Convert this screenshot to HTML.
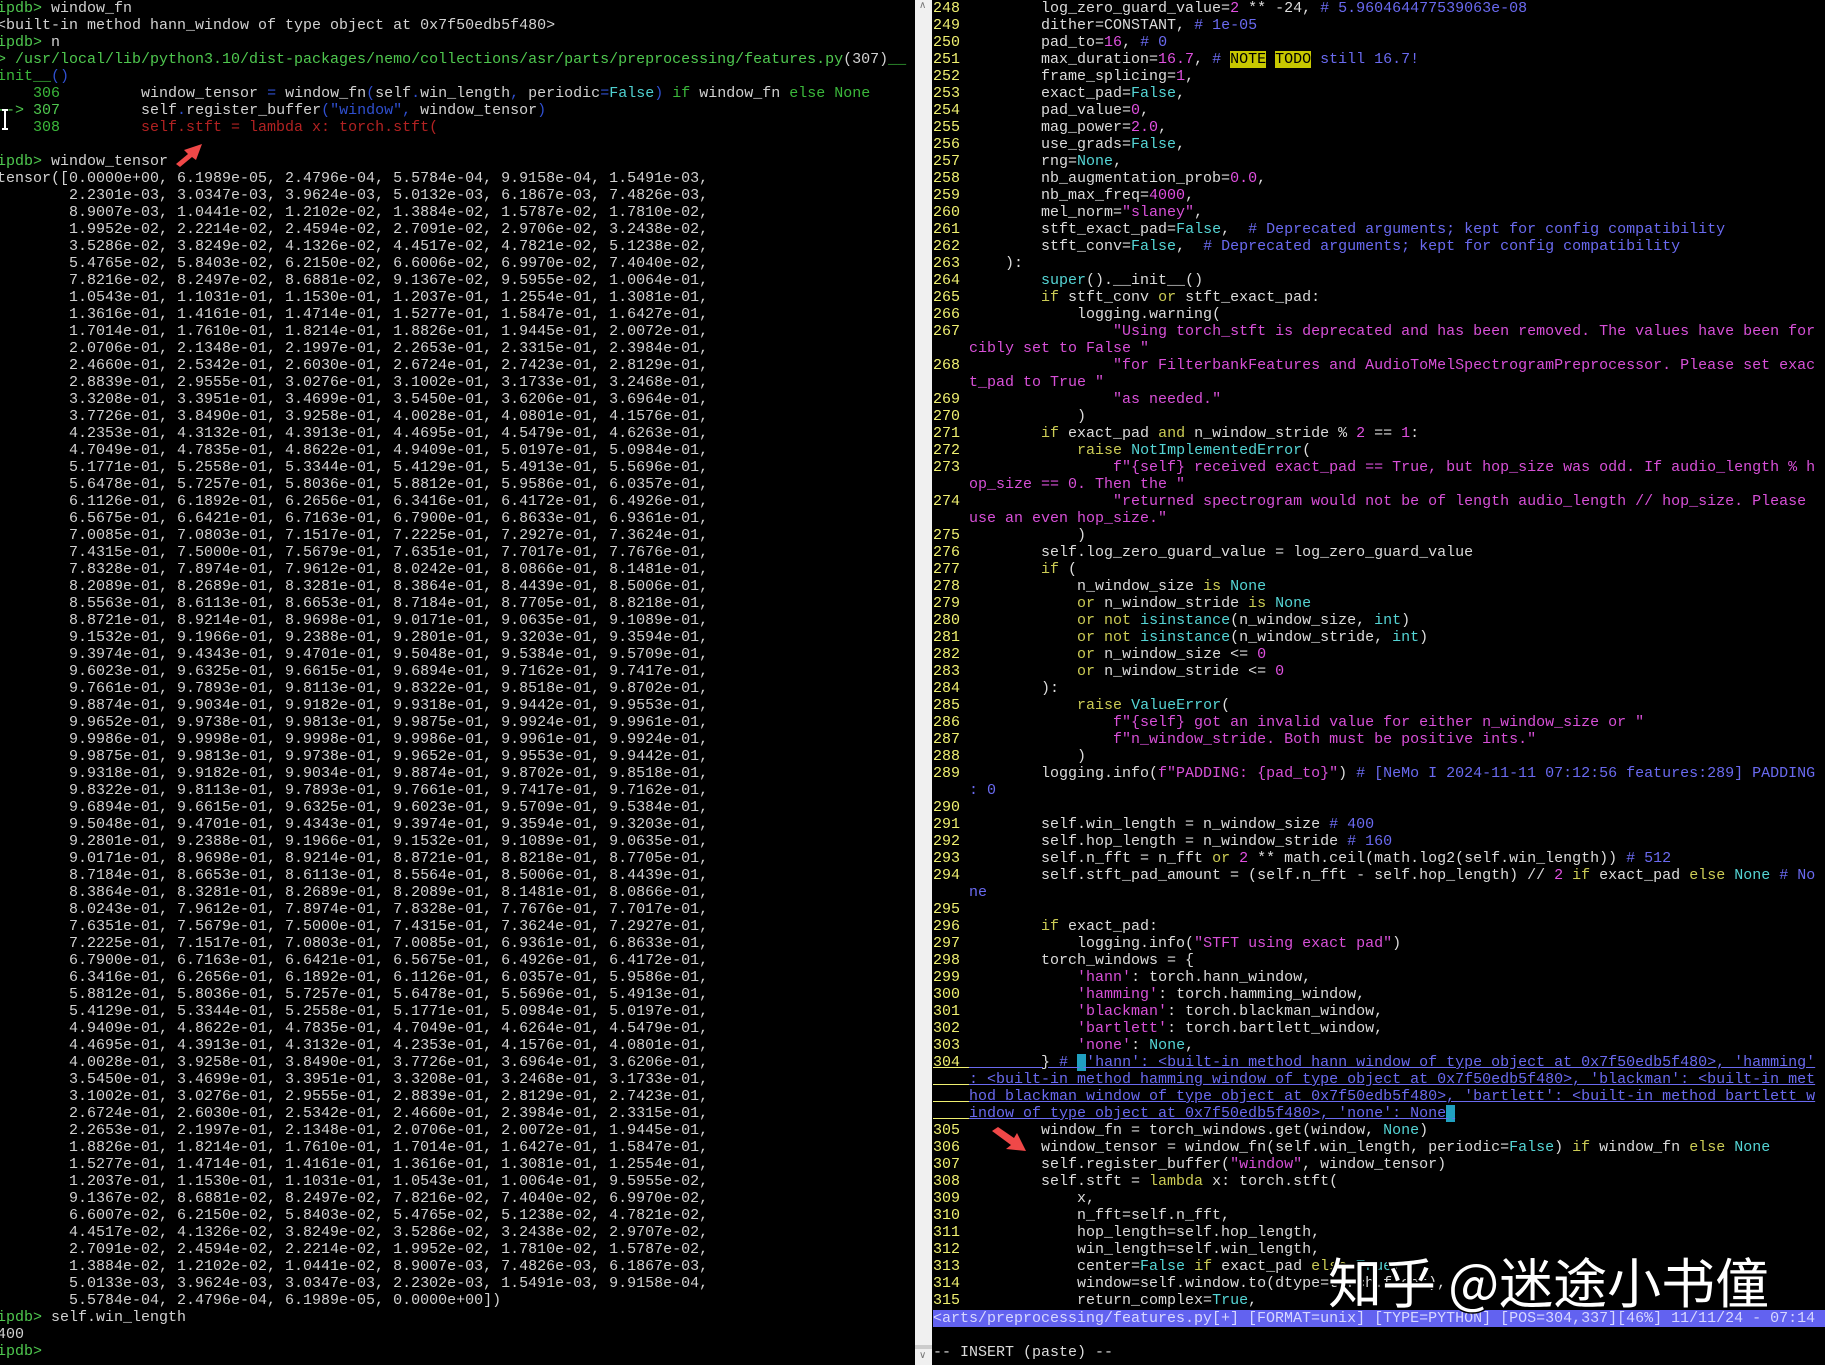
<!DOCTYPE html>
<html><head><meta charset="utf-8">
<style>
html,body{margin:0;padding:0;background:#000;width:1825px;height:1365px;overflow:hidden;position:relative}
pre{margin:0;font-family:"Liberation Mono","DejaVu Sans Mono",monospace;white-space:pre}
#L{position:absolute;left:-3px;top:0;font-size:15px;line-height:17px;color:#d2d2d2}
#R{position:absolute;left:933px;top:0;width:892px;font-size:15px;color:#dcdcdc}
#R div{height:17px;line-height:17px;white-space:pre;font-family:"Liberation Mono","DejaVu Sans Mono",monospace;overflow:hidden}
.g{color:#4fc84f}.gr{color:#3bb83b}.bl{color:#2f4fd0}.cy{color:#4fd0d0}.rd{color:#b22222}
.n{color:#f0f070}.m{color:#e050e0}.c{color:#6a6af0}.k{color:#cccc55}.t{color:#55d5d5}.s{color:#d850d8}
.hl{background:#c8c800;color:#000}
.u .n{text-decoration:underline;text-decoration-color:#f0f070}
.u{text-decoration:underline;text-decoration-color:#6a6af0}
.cur{background:#20a0c0;color:#20a0c0}
#sb{position:absolute;left:915px;top:0;width:17px;height:1365px;background:#f0f0f0}
#sb .a{position:absolute;left:4px;font-size:10px;color:#777;font-family:"DejaVu Sans",sans-serif}
#status{position:absolute;left:933px;top:1310px;width:892px;height:17px;background:#6262f0;color:#d8d8ff;font-size:15px;line-height:17px}
#ins{position:absolute;left:933px;top:1344px;font-size:15px;line-height:17px;color:#dcdcdc}
#wm{position:absolute;left:1328px;top:1248px;font-family:"Noto Sans CJK SC","WenQuanYi Zen Hei",sans-serif;font-size:54px;line-height:64px;color:#fff;-webkit-text-stroke:3px #000;paint-order:stroke fill;letter-spacing:0px}
svg{position:absolute}
</style></head><body>
<pre id="L"><span class="g">ipdb&gt;</span> window_fn
&lt;built-in method hann_window of type object at 0x7f50edb5f480&gt;
<span class="g">ipdb&gt;</span> n
<span class="g">&gt; /usr/local/lib/python3.10/dist-packages/nemo/collections/asr/parts/preprocessing/features.py</span>(307)<span class="gr">__</span>
<span class="gr">init__</span><span class="bl">()</span>
<span class="gr">    306</span>         window_tensor <span class="bl">=</span> window_fn<span class="bl">(</span>self<span class="bl">.</span>win_length<span class="bl">,</span> periodic<span class="bl">=</span><span class="cy">False</span><span class="bl">)</span> <span class="gr">if</span> window_fn <span class="gr">else None</span>
<span class="g">--&gt; 307</span>         self<span class="bl">.</span>register_buffer<span class="bl">(</span><span class="bl">"window"</span><span class="bl">,</span> window_tensor<span class="bl">)</span>
<span class="gr">    308</span>         <span class="rd">self.stft = lambda x: torch.stft(</span>

<span class="g">ipdb&gt;</span> window_tensor
tensor([0.0000e+00, 6.1989e-05, 2.4796e-04, 5.5784e-04, 9.9158e-04, 1.5491e-03,
        2.2301e-03, 3.0347e-03, 3.9624e-03, 5.0132e-03, 6.1867e-03, 7.4826e-03,
        8.9007e-03, 1.0441e-02, 1.2102e-02, 1.3884e-02, 1.5787e-02, 1.7810e-02,
        1.9952e-02, 2.2214e-02, 2.4594e-02, 2.7091e-02, 2.9706e-02, 3.2438e-02,
        3.5286e-02, 3.8249e-02, 4.1326e-02, 4.4517e-02, 4.7821e-02, 5.1238e-02,
        5.4765e-02, 5.8403e-02, 6.2150e-02, 6.6006e-02, 6.9970e-02, 7.4040e-02,
        7.8216e-02, 8.2497e-02, 8.6881e-02, 9.1367e-02, 9.5955e-02, 1.0064e-01,
        1.0543e-01, 1.1031e-01, 1.1530e-01, 1.2037e-01, 1.2554e-01, 1.3081e-01,
        1.3616e-01, 1.4161e-01, 1.4714e-01, 1.5277e-01, 1.5847e-01, 1.6427e-01,
        1.7014e-01, 1.7610e-01, 1.8214e-01, 1.8826e-01, 1.9445e-01, 2.0072e-01,
        2.0706e-01, 2.1348e-01, 2.1997e-01, 2.2653e-01, 2.3315e-01, 2.3984e-01,
        2.4660e-01, 2.5342e-01, 2.6030e-01, 2.6724e-01, 2.7423e-01, 2.8129e-01,
        2.8839e-01, 2.9555e-01, 3.0276e-01, 3.1002e-01, 3.1733e-01, 3.2468e-01,
        3.3208e-01, 3.3951e-01, 3.4699e-01, 3.5450e-01, 3.6206e-01, 3.6964e-01,
        3.7726e-01, 3.8490e-01, 3.9258e-01, 4.0028e-01, 4.0801e-01, 4.1576e-01,
        4.2353e-01, 4.3132e-01, 4.3913e-01, 4.4695e-01, 4.5479e-01, 4.6263e-01,
        4.7049e-01, 4.7835e-01, 4.8622e-01, 4.9409e-01, 5.0197e-01, 5.0984e-01,
        5.1771e-01, 5.2558e-01, 5.3344e-01, 5.4129e-01, 5.4913e-01, 5.5696e-01,
        5.6478e-01, 5.7257e-01, 5.8036e-01, 5.8812e-01, 5.9586e-01, 6.0357e-01,
        6.1126e-01, 6.1892e-01, 6.2656e-01, 6.3416e-01, 6.4172e-01, 6.4926e-01,
        6.5675e-01, 6.6421e-01, 6.7163e-01, 6.7900e-01, 6.8633e-01, 6.9361e-01,
        7.0085e-01, 7.0803e-01, 7.1517e-01, 7.2225e-01, 7.2927e-01, 7.3624e-01,
        7.4315e-01, 7.5000e-01, 7.5679e-01, 7.6351e-01, 7.7017e-01, 7.7676e-01,
        7.8328e-01, 7.8974e-01, 7.9612e-01, 8.0242e-01, 8.0866e-01, 8.1481e-01,
        8.2089e-01, 8.2689e-01, 8.3281e-01, 8.3864e-01, 8.4439e-01, 8.5006e-01,
        8.5563e-01, 8.6113e-01, 8.6653e-01, 8.7184e-01, 8.7705e-01, 8.8218e-01,
        8.8721e-01, 8.9214e-01, 8.9698e-01, 9.0171e-01, 9.0635e-01, 9.1089e-01,
        9.1532e-01, 9.1966e-01, 9.2388e-01, 9.2801e-01, 9.3203e-01, 9.3594e-01,
        9.3974e-01, 9.4343e-01, 9.4701e-01, 9.5048e-01, 9.5384e-01, 9.5709e-01,
        9.6023e-01, 9.6325e-01, 9.6615e-01, 9.6894e-01, 9.7162e-01, 9.7417e-01,
        9.7661e-01, 9.7893e-01, 9.8113e-01, 9.8322e-01, 9.8518e-01, 9.8702e-01,
        9.8874e-01, 9.9034e-01, 9.9182e-01, 9.9318e-01, 9.9442e-01, 9.9553e-01,
        9.9652e-01, 9.9738e-01, 9.9813e-01, 9.9875e-01, 9.9924e-01, 9.9961e-01,
        9.9986e-01, 9.9998e-01, 9.9998e-01, 9.9986e-01, 9.9961e-01, 9.9924e-01,
        9.9875e-01, 9.9813e-01, 9.9738e-01, 9.9652e-01, 9.9553e-01, 9.9442e-01,
        9.9318e-01, 9.9182e-01, 9.9034e-01, 9.8874e-01, 9.8702e-01, 9.8518e-01,
        9.8322e-01, 9.8113e-01, 9.7893e-01, 9.7661e-01, 9.7417e-01, 9.7162e-01,
        9.6894e-01, 9.6615e-01, 9.6325e-01, 9.6023e-01, 9.5709e-01, 9.5384e-01,
        9.5048e-01, 9.4701e-01, 9.4343e-01, 9.3974e-01, 9.3594e-01, 9.3203e-01,
        9.2801e-01, 9.2388e-01, 9.1966e-01, 9.1532e-01, 9.1089e-01, 9.0635e-01,
        9.0171e-01, 8.9698e-01, 8.9214e-01, 8.8721e-01, 8.8218e-01, 8.7705e-01,
        8.7184e-01, 8.6653e-01, 8.6113e-01, 8.5564e-01, 8.5006e-01, 8.4439e-01,
        8.3864e-01, 8.3281e-01, 8.2689e-01, 8.2089e-01, 8.1481e-01, 8.0866e-01,
        8.0243e-01, 7.9612e-01, 7.8974e-01, 7.8328e-01, 7.7676e-01, 7.7017e-01,
        7.6351e-01, 7.5679e-01, 7.5000e-01, 7.4315e-01, 7.3624e-01, 7.2927e-01,
        7.2225e-01, 7.1517e-01, 7.0803e-01, 7.0085e-01, 6.9361e-01, 6.8633e-01,
        6.7900e-01, 6.7163e-01, 6.6421e-01, 6.5675e-01, 6.4926e-01, 6.4172e-01,
        6.3416e-01, 6.2656e-01, 6.1892e-01, 6.1126e-01, 6.0357e-01, 5.9586e-01,
        5.8812e-01, 5.8036e-01, 5.7257e-01, 5.6478e-01, 5.5696e-01, 5.4913e-01,
        5.4129e-01, 5.3344e-01, 5.2558e-01, 5.1771e-01, 5.0984e-01, 5.0197e-01,
        4.9409e-01, 4.8622e-01, 4.7835e-01, 4.7049e-01, 4.6264e-01, 4.5479e-01,
        4.4695e-01, 4.3913e-01, 4.3132e-01, 4.2353e-01, 4.1576e-01, 4.0801e-01,
        4.0028e-01, 3.9258e-01, 3.8490e-01, 3.7726e-01, 3.6964e-01, 3.6206e-01,
        3.5450e-01, 3.4699e-01, 3.3951e-01, 3.3208e-01, 3.2468e-01, 3.1733e-01,
        3.1002e-01, 3.0276e-01, 2.9555e-01, 2.8839e-01, 2.8129e-01, 2.7423e-01,
        2.6724e-01, 2.6030e-01, 2.5342e-01, 2.4660e-01, 2.3984e-01, 2.3315e-01,
        2.2653e-01, 2.1997e-01, 2.1348e-01, 2.0706e-01, 2.0072e-01, 1.9445e-01,
        1.8826e-01, 1.8214e-01, 1.7610e-01, 1.7014e-01, 1.6427e-01, 1.5847e-01,
        1.5277e-01, 1.4714e-01, 1.4161e-01, 1.3616e-01, 1.3081e-01, 1.2554e-01,
        1.2037e-01, 1.1530e-01, 1.1031e-01, 1.0543e-01, 1.0064e-01, 9.5955e-02,
        9.1367e-02, 8.6881e-02, 8.2497e-02, 7.8216e-02, 7.4040e-02, 6.9970e-02,
        6.6007e-02, 6.2150e-02, 5.8403e-02, 5.4765e-02, 5.1238e-02, 4.7821e-02,
        4.4517e-02, 4.1326e-02, 3.8249e-02, 3.5286e-02, 3.2438e-02, 2.9707e-02,
        2.7091e-02, 2.4594e-02, 2.2214e-02, 1.9952e-02, 1.7810e-02, 1.5787e-02,
        1.3884e-02, 1.2102e-02, 1.0441e-02, 8.9007e-03, 7.4826e-03, 6.1867e-03,
        5.0133e-03, 3.9624e-03, 3.0347e-03, 2.2302e-03, 1.5491e-03, 9.9158e-04,
        5.5784e-04, 2.4796e-04, 6.1989e-05, 0.0000e+00])
<span class="g">ipdb&gt;</span> self.win_length
400
<span class="g">ipdb&gt;</span></pre>

<svg style="left:0;top:108px" width="12" height="24"><path d="M2 2h6M5 2v19M2 21h6" stroke="#fff" stroke-width="2" fill="none"/></svg>
<svg style="left:172px;top:140px" width="36" height="28"><path d="M4 24 L16 14 L12 10 L30 4 L24 20 L20 17 L8 27 Z" fill="#f04848"/></svg>

<div id="sb"><span class="a" style="top:0">&#8743;</span><span class="a" style="top:1350px">&#8744;</span><div style="position:absolute;left:0;top:1345px;width:17px;height:4px;background:#ccc"></div></div>

<div id="R">
<div><span class="n">248 </span>        log_zero_guard_value=<span class="m">2</span> ** -24, <span class="c"># 5.960464477539063e-08</span></div>
<div><span class="n">249 </span>        dither=CONSTANT, <span class="c"># 1e-05</span></div>
<div><span class="n">250 </span>        pad_to=<span class="m">16</span>, <span class="c"># 0</span></div>
<div><span class="n">251 </span>        max_duration=<span class="m">16.7</span>, <span class="c"># </span><span class="hl">NOTE</span> <span class="hl">TODO</span><span class="c"> still 16.7!</span></div>
<div><span class="n">252 </span>        frame_splicing=<span class="m">1</span>,</div>
<div><span class="n">253 </span>        exact_pad=<span class="t">False</span>,</div>
<div><span class="n">254 </span>        pad_value=<span class="m">0</span>,</div>
<div><span class="n">255 </span>        mag_power=<span class="m">2.0</span>,</div>
<div><span class="n">256 </span>        use_grads=<span class="t">False</span>,</div>
<div><span class="n">257 </span>        rng=<span class="t">None</span>,</div>
<div><span class="n">258 </span>        nb_augmentation_prob=<span class="m">0.0</span>,</div>
<div><span class="n">259 </span>        nb_max_freq=<span class="m">4000</span>,</div>
<div><span class="n">260 </span>        mel_norm=<span class="s">"slaney"</span>,</div>
<div><span class="n">261 </span>        stft_exact_pad=<span class="t">False</span>,  <span class="c"># Deprecated arguments; kept for config compatibility</span></div>
<div><span class="n">262 </span>        stft_conv=<span class="t">False</span>,  <span class="c"># Deprecated arguments; kept for config compatibility</span></div>
<div><span class="n">263 </span>    ):</div>
<div><span class="n">264 </span>        <span class="t">super</span>().__init__()</div>
<div><span class="n">265 </span>        <span class="k">if</span> stft_conv <span class="k">or</span> stft_exact_pad:</div>
<div><span class="n">266 </span>            logging.warning(</div>
<div><span class="n">267 </span>                <span class="s">"Using torch_stft is deprecated and has been removed. The values have been for</span></div>
<div>    <span class="s">cibly set to False "</span></div>
<div><span class="n">268 </span>                <span class="s">"for FilterbankFeatures and AudioToMelSpectrogramPreprocessor. Please set exac</span></div>
<div>    <span class="s">t_pad to True "</span></div>
<div><span class="n">269 </span>                <span class="s">"as needed."</span></div>
<div><span class="n">270 </span>            )</div>
<div><span class="n">271 </span>        <span class="k">if</span> exact_pad <span class="k">and</span> n_window_stride % <span class="m">2</span> == <span class="m">1</span>:</div>
<div><span class="n">272 </span>            <span class="k">raise</span> <span class="t">NotImplementedError</span>(</div>
<div><span class="n">273 </span>                <span class="s">f"{self} received exact_pad == True, but hop_size was odd. If audio_length % h</span></div>
<div>    <span class="s">op_size == 0. Then the "</span></div>
<div><span class="n">274 </span>                <span class="s">"returned spectrogram would not be of length audio_length // hop_size. Please </span></div>
<div>    <span class="s">use an even hop_size."</span></div>
<div><span class="n">275 </span>            )</div>
<div><span class="n">276 </span>        self.log_zero_guard_value = log_zero_guard_value</div>
<div><span class="n">277 </span>        <span class="k">if</span> (</div>
<div><span class="n">278 </span>            n_window_size <span class="k">is</span> <span class="t">None</span></div>
<div><span class="n">279 </span>            <span class="k">or</span> n_window_stride <span class="k">is</span> <span class="t">None</span></div>
<div><span class="n">280 </span>            <span class="k">or not</span> <span class="t">isinstance</span>(n_window_size, <span class="t">int</span>)</div>
<div><span class="n">281 </span>            <span class="k">or not</span> <span class="t">isinstance</span>(n_window_stride, <span class="t">int</span>)</div>
<div><span class="n">282 </span>            <span class="k">or</span> n_window_size &lt;= <span class="m">0</span></div>
<div><span class="n">283 </span>            <span class="k">or</span> n_window_stride &lt;= <span class="m">0</span></div>
<div><span class="n">284 </span>        ):</div>
<div><span class="n">285 </span>            <span class="k">raise</span> <span class="t">ValueError</span>(</div>
<div><span class="n">286 </span>                <span class="s">f"{self} got an invalid value for either n_window_size or "</span></div>
<div><span class="n">287 </span>                <span class="s">f"n_window_stride. Both must be positive ints."</span></div>
<div><span class="n">288 </span>            )</div>
<div><span class="n">289 </span>        logging.info(<span class="s">f"PADDING: {pad_to}"</span>) <span class="c"># [NeMo I 2024-11-11 07:12:56 features:289] PADDING</span></div>
<div>    <span class="c">: 0</span></div>
<div><span class="n">290 </span></div>
<div><span class="n">291 </span>        self.win_length = n_window_size <span class="c"># 400</span></div>
<div><span class="n">292 </span>        self.hop_length = n_window_stride <span class="c"># 160</span></div>
<div><span class="n">293 </span>        self.n_fft = n_fft <span class="k">or</span> <span class="m">2</span> ** math.ceil(math.log2(self.win_length)) <span class="c"># 512</span></div>
<div><span class="n">294 </span>        self.stft_pad_amount = (self.n_fft - self.hop_length) // <span class="m">2</span> <span class="k">if</span> exact_pad <span class="k">else</span> <span class="t">None</span> <span class="c"># No</span></div>
<div>    <span class="c">ne</span></div>
<div><span class="n">295 </span></div>
<div><span class="n">296 </span>        <span class="k">if</span> exact_pad:</div>
<div><span class="n">297 </span>            logging.info(<span class="s">"STFT using exact pad"</span>)</div>
<div><span class="n">298 </span>        torch_windows = {</div>
<div><span class="n">299 </span>            <span class="s">'hann'</span>: torch.hann_window,</div>
<div><span class="n">300 </span>            <span class="s">'hamming'</span>: torch.hamming_window,</div>
<div><span class="n">301 </span>            <span class="s">'blackman'</span>: torch.blackman_window,</div>
<div><span class="n">302 </span>            <span class="s">'bartlett'</span>: torch.bartlett_window,</div>
<div><span class="n">303 </span>            <span class="s">'none'</span>: <span class="t">None</span>,</div>
<div class="u"><span class="n">304 </span>        } <span class="c"># </span><span class="cur">|</span><span class="c">'hann': &lt;built-in method hann_window of type object at 0x7f50edb5f480&gt;, 'hamming'</span></div>
<div class="u"><span class="n">    </span><span class="c">: &lt;built-in method hamming_window of type object at 0x7f50edb5f480&gt;, 'blackman': &lt;built-in met</span></div>
<div class="u"><span class="n">    </span><span class="c">hod blackman_window of type object at 0x7f50edb5f480&gt;, 'bartlett': &lt;built-in method bartlett_w</span></div>
<div class="u"><span class="n">    </span><span class="c">indow of type object at 0x7f50edb5f480&gt;, 'none': None</span><span class="cur">|</span></div>
<div><span class="n">305 </span>        window_fn = torch_windows.get(window, <span class="t">None</span>)</div>
<div><span class="n">306 </span>        window_tensor = window_fn(self.win_length, periodic=<span class="t">False</span>) <span class="k">if</span> window_fn <span class="k">else</span> <span class="t">None</span></div>
<div><span class="n">307 </span>        self.register_buffer(<span class="s">"window"</span>, window_tensor)</div>
<div><span class="n">308 </span>        self.stft = <span class="k">lambda</span> x: torch.stft(</div>
<div><span class="n">309 </span>            x,</div>
<div><span class="n">310 </span>            n_fft=self.n_fft,</div>
<div><span class="n">311 </span>            hop_length=self.hop_length,</div>
<div><span class="n">312 </span>            win_length=self.win_length,</div>
<div><span class="n">313 </span>            center=<span class="t">False</span> <span class="k">if</span> exact_pad <span class="k">else</span> <span class="t">True</span>,</div>
<div><span class="n">314 </span>            window=self.window.to(dtype=torch.float),</div>
<div><span class="n">315 </span>            return_complex=<span class="t">True</span>,</div>
</div>

<pre id="status">&lt;arts/preprocessing/features.py[+] [FORMAT=unix] [TYPE=PYTHON] [POS=304,337][46%] 11/11/24 - 07:14</pre>
<pre id="ins">-- INSERT (paste) --</pre>

<svg style="left:990px;top:1125px" width="42" height="30"><path d="M2 6 L8 2 L24 13 L27 8 L36 26 L16 24 L21 20 Z" fill="#f04848"/></svg>

<div id="wm">知乎 @迷途小书僮</div>
</body></html>
